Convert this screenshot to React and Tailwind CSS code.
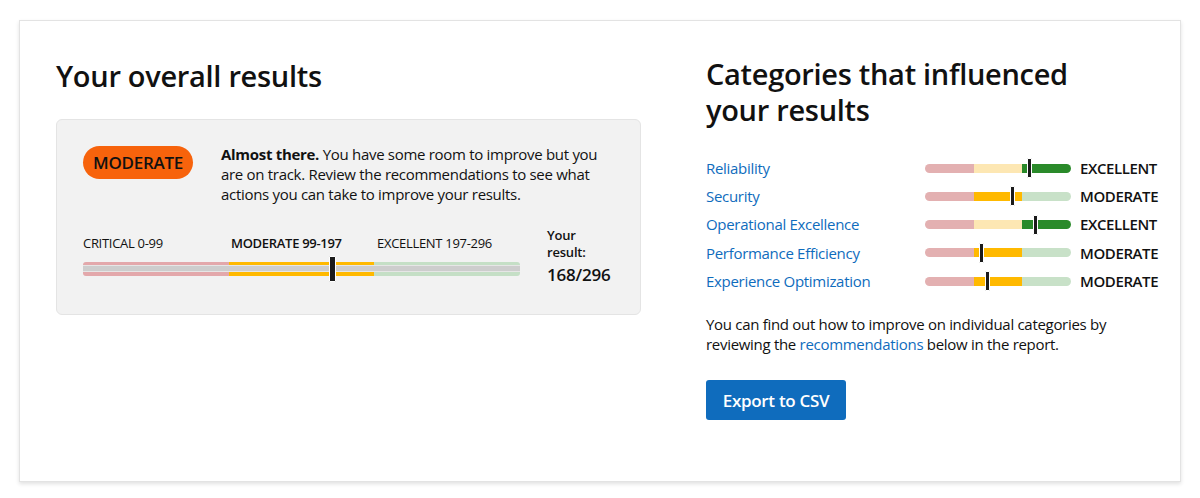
import React from "react";

const font = { fontFamily: '"Open Sans", "Noto Sans", sans-serif' };

const categories = [
  { name: "Reliability", level: "EXCELLENT", pos: 104 },
  { name: "Security", level: "MODERATE", pos: 87 },
  { name: "Operational Excellence", level: "EXCELLENT", pos: 110 },
  { name: "Performance Efficiency", level: "MODERATE", pos: 56 },
  { name: "Experience Optimization", level: "MODERATE", pos: 62 },
];

const Marker = ({ left, className }) => (
  <div
    className={`absolute bg-[#1b1b1b] border border-white rounded-[1px] ${className}`}
    style={{ left }}
  />
);

const MiniBar = ({ level, pos }) => {
  const excellent = level === "EXCELLENT";
  return (
    <div className="relative w-[146px] h-[20px] flex items-center">
      <div className="flex w-full h-[9px] rounded-full overflow-hidden">
        <div className="flex-1 bg-[#e3b0b1]" />
        <div className={`flex-1 ${excellent ? "bg-[#fde7b3]" : "bg-[#ffb900]"}`} />
        <div className={`flex-1 ${excellent ? "bg-[#2a8a2a]" : "bg-[#c8e1c8]"}`} />
      </div>
      <Marker left={pos - 2} className="top-0 w-[5px] h-[20px]" />
    </div>
  );
};

const Segment = ({ color, rounded }) => (
  <div className={`flex-1 py-[3px] ${color} ${rounded}`}>
    <div className="h-[7px] bg-[#cdcdcd] border-y border-[#e6e6e6]" />
  </div>
);

export default function App() {
  return (
    <div className="min-h-screen bg-white pt-[20px] px-[19px]" style={font}>
      <div className="h-[462px] border border-[#e3e3e3] bg-white shadow-[0_2px_4px_rgba(0,0,0,0.12)] flex pl-[36px] pr-[18px] pt-[35px]">
        <div className="w-[585px]">
          <h1 className="text-[29px] leading-[40px] font-semibold text-[#111] tracking-[-0.3px]">
            Your overall results
          </h1>
          <div className="mt-[23px] h-[196px] bg-[#f2f2f2] border border-[#e4e4e4] rounded-[6px] pl-[26px] pr-[26px] pt-[26px]">
            <div className="flex gap-[28px]">
              <div className="shrink-0 w-[110px] h-[33px] rounded-full bg-[#f7630c] flex items-center justify-center text-[17px] font-semibold text-[#111] tracking-[-0.3px]">
                MODERATE
              </div>
              <p className="w-[392px] text-[15px] leading-[20px] text-[#111] -mt-[2px] tracking-[-0.3px]">
                <b className="font-bold">Almost there.</b>{" "}You have some room to improve but you are on track. Review the recommendations to see what actions you can take to improve your results.
              </p>
            </div>
            <div className="flex mt-[14px]">
              <div className="w-[437px] pt-[16px]">
                <div className="flex text-[13px] leading-[18px] text-[#111] tracking-[-0.3px]">
                  <div className="w-[146px]">CRITICAL 0-99</div>
                  <div className="w-[145px] pl-[2px] font-semibold">MODERATE 99-197</div>
                  <div className="pl-[3px]">EXCELLENT 197-296</div>
                </div>
                <div className="relative mt-[10px] h-[14px] flex">
                  <Segment color="bg-[#e3a8ab]" rounded="rounded-l-[3px]" />
                  <Segment color="bg-[#ffb900]" rounded="" />
                  <Segment color="bg-[#c5dfc6]" rounded="rounded-r-[3px]" />
                  <Marker left={246} className="-top-[6px] w-[7px] h-[26px]" />
                </div>
              </div>
              <div className="ml-[27px] pt-[9px] text-[#111]">
                <div className="text-[13px] leading-[17px] font-semibold tracking-[-0.2px]">
                  Your
                  <br />
                  result:
                </div>
                <div className="text-[17px] leading-[22px] font-semibold mt-[3px] tracking-[-0.2px]">168/296</div>
              </div>
            </div>
          </div>
        </div>

        <div className="ml-[65px] flex-1">
          <h2 className="text-[29px] leading-[36px] font-semibold text-[#111] tracking-[-0.3px]">
            Categories that influenced
            <br />
            your results
          </h2>
          <div className="mt-[26px] flex flex-col">
            {categories.map((c) => (
              <div key={c.name} className="flex items-center h-[28.25px]">
                <a className="w-[219px] text-[15px] text-[#0f6cbd] tracking-[-0.3px]">{c.name}</a>
                <MiniBar level={c.level} pos={c.pos} />
                <span className="ml-[9px] text-[15px] font-semibold text-[#111] tracking-[-0.4px]">{c.level}</span>
              </div>
            ))}
          </div>
          <p className="mt-[19px] text-[15px] leading-[20px] text-[#111] tracking-[-0.3px]">
            You can find out how to improve on individual categories by
            <br />
            reviewing the <a className="text-[#0f6cbd]">recommendations</a> below in the report.
          </p>
          <button className="mt-[26px] w-[140px] h-[40px] rounded-[3px] bg-[#0f6cbd] text-white text-[17px] font-semibold tracking-[-0.3px]">
            Export to CSV
          </button>
        </div>
      </div>
    </div>
  );
}
